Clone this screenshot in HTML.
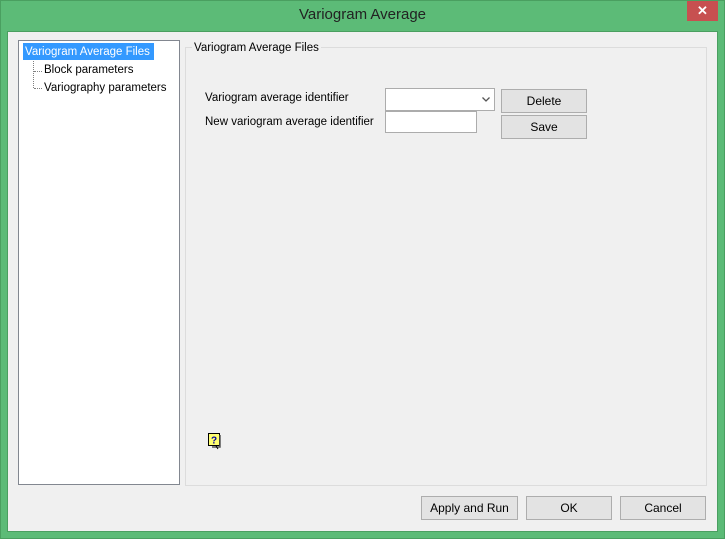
<!DOCTYPE html>
<html><head><style>
body{margin:0;width:725px;height:539px;background:#5cbb77;font-family:"Liberation Sans",sans-serif;font-size:11.5px;color:#000;position:relative;overflow:hidden}
.abs{position:absolute;white-space:nowrap}
.btn{position:absolute;background:#e3e3e3;border:1px solid #adadad;box-sizing:border-box;text-align:center;font-size:12px}
</style></head><body>
<div class="abs" style="left:0;top:0;width:725px;height:539px;border:1px solid #4a9f60;box-sizing:border-box"></div>
<div class="abs" style="left:0;top:6px;width:725px;text-align:center;font-size:15px;color:#222">Variogram Average</div>
<div class="abs" style="left:687px;top:1px;width:31px;height:20px;background:#c75050;color:#fff;text-align:center;font-size:13px;font-weight:bold;line-height:20px">✕</div>
<div class="abs" style="left:7px;top:31px;width:711px;height:501px;background:#f0f0f0;border:1px solid #4a9f60;box-sizing:border-box"></div>
<div class="abs" style="left:18px;top:40px;width:162px;height:445px;background:#ffffff;border:1px solid #828790;box-sizing:border-box"></div>
<div class="abs" style="left:23px;top:43px;width:131px;height:17px;background:#3399ff;color:#fff;line-height:18px;padding-left:2px;box-sizing:border-box;overflow:hidden">Variogram Average Files</div>
<div class="abs" style="left:33px;top:61px;width:1px;height:27px;border-left:1px dotted #808080"></div>
<div class="abs" style="left:34px;top:71px;width:8px;border-top:1px dotted #808080"></div>
<div class="abs" style="left:34px;top:88px;width:8px;border-top:1px dotted #808080"></div>
<div class="abs" style="left:44px;top:64px">Block parameters</div>
<div class="abs" style="left:44px;top:82px">Variography parameters</div>
<div class="abs" style="left:185px;top:47px;width:522px;height:439px;border:1px solid #dcdcdc;box-sizing:border-box"></div>
<div class="abs" style="left:192px;top:42px;background:#f0f0f0;padding:0 2px">Variogram Average Files</div>
<div class="abs" style="left:205px;top:92px">Variogram average identifier</div>
<div class="abs" style="left:205px;top:116px">New variogram average identifier</div>
<div class="abs" style="left:385px;top:88px;width:110px;height:23px;background:#fff;border:1px solid #acacac;box-sizing:border-box"><svg class="abs" style="right:4px;top:8px" width="8" height="5"><path d="M0.5 0.5L4 4L7.5 0.5" stroke="#555" fill="none" stroke-width="1.3"/></svg></div>
<div class="abs" style="left:385px;top:111px;width:92px;height:22px;background:#fff;border:1px solid #acacac;box-sizing:border-box"></div>
<div class="btn" style="left:501px;top:89px;width:86px;height:24px;line-height:22px">Delete</div>
<div class="btn" style="left:501px;top:115px;width:86px;height:24px;line-height:22px">Save</div>
<svg class="abs" style="left:207px;top:432px" width="16" height="18"><rect x="1.5" y="1.5" width="11" height="12" fill="#ffff70" stroke="#000"/><path d="M13 3V15H5" stroke="#555" fill="none" stroke-width="1.5"/><path d="M9 14L11 17" stroke="#000"/><text x="7" y="11.5" font-family="Liberation Sans" font-size="10" font-weight="bold" fill="#0000a0" text-anchor="middle">?</text></svg>
<div class="btn" style="left:421px;top:496px;width:97px;height:24px;line-height:22px">Apply and Run</div>
<div class="btn" style="left:526px;top:496px;width:86px;height:24px;line-height:22px">OK</div>
<div class="btn" style="left:620px;top:496px;width:86px;height:24px;line-height:22px">Cancel</div>
</body></html>
